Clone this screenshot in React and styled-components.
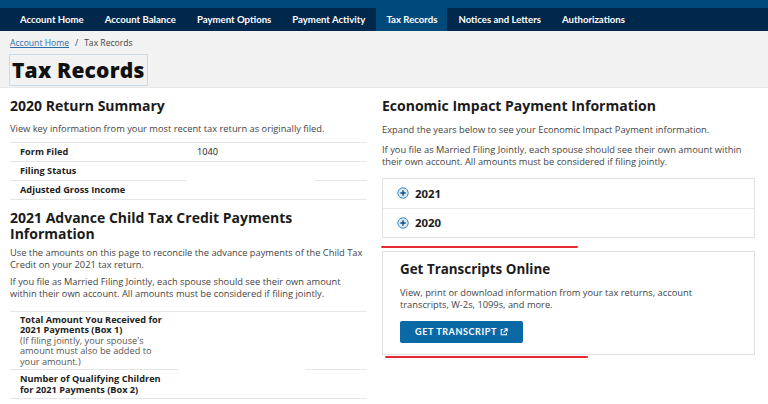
import React from 'react';
import styled, { createGlobalStyle } from 'styled-components';

const GlobalStyle = createGlobalStyle`
  html, body {
    margin: 0;
    padding: 0;
    background: #fff;
  }
  body {
    font-family: "Open Sans", "Liberation Sans", sans-serif;
    color: #333;
  }
  * { box-sizing: border-box; }
`;

const navItems = [
  'Account Home',
  'Account Balance',
  'Payment Options',
  'Payment Activity',
  'Tax Records',
  'Notices and Letters',
  'Authorizations',
];

const TopStrip = styled.div`
  height: 8px;
  background: #004a7b;
`;

const Nav = styled.nav`
  display: flex;
  height: 23px;
  padding-left: 10px;
  background: #00284c;
`;

const NavItem = styled.a`
  display: flex;
  align-items: center;
  padding: 0 10px;
  margin-right: 1px;
  font-family: Lato, "Liberation Sans", sans-serif;
  font-weight: 700;
  font-size: 9.6px;
  color: #fff;
  background: ${(p) => (p.$active ? '#004a7b' : 'transparent')};
  text-decoration: none;
  white-space: nowrap;
`;

const Band = styled.div`
  height: 57px;
  padding: 6px 9px 0;
  background: #f2f2f2;
  border-bottom: 1px solid #e8e8e8;
`;

const Crumbs = styled.div`
  font-size: 8.6px;
  line-height: 12px;
  color: #444;
  margin-left: 1px;

  a {
    color: #2b6ea9;
    text-decoration: underline;
  }

  span {
    margin: 0 6px;
  }
`;

const PageTitle = styled.h1`
  display: inline-block;
  margin: 5px 0 0;
  padding: 0 2px;
  height: 32px;
  line-height: 30px;
  border: 1px solid #c7dbea;
  font-size: 21px;
  font-weight: 800;
  color: #111;
  letter-spacing: 0.2px;
`;

const Content = styled.main`
  display: grid;
  grid-template-columns: 357px 373px;
  column-gap: 15px;
  padding: 10px 13px 0 10px;
`;

const Column = styled.section`
  display: flex;
  flex-direction: column;
`;

const Heading = styled.h2`
  margin: ${(p) => p.$top || 0}px 0 0;
  max-width: ${(p) => p.$max || 'none'};
  font-size: 14px;
  line-height: 16px;
  font-weight: 700;
  color: #1b1b1b;
`;

const Para = styled.p`
  margin: ${(p) => p.$top || 0}px 0 0;
  font-size: 9.3px;
  line-height: 12.5px;
  color: #444;
`;

const Table = styled.div`
  display: grid;
  grid-template-columns: ${(p) => p.$cols};
  margin-top: ${(p) => p.$top}px;
  border-top: 1px solid #e6e6e6;
`;

const Cell = styled.div`
  padding: ${(p) => p.$pad || '4px 10px'};
  min-height: 18px;
  font-size: 9.2px;
  line-height: ${(p) => p.$lh || '10px'};
  font-weight: ${(p) => (p.$bold ? 700 : 400)};
  color: #222;
  border-bottom: 1px solid ${(p) => (p.$bare ? 'transparent' : '#e6e6e6')};
  display: flex;
  flex-direction: column;
  justify-content: center;
`;

const Note = styled.span`
  font-weight: 400;
  color: #555;
`;

const Accordion = styled.div`
  margin-top: 9px;
  border: 1px solid #e2e2e2;
`;

const AccRow = styled.div`
  display: flex;
  align-items: center;
  gap: 6px;
  height: 29px;
  padding-left: 14px;
  font-size: 11.4px;
  font-weight: 700;
  color: #1b1b1b;
  border-top: ${(p) => (p.$first ? 'none' : '1px solid #e8e8e8')};
`;

// red underline marks drawn over the screenshot
const Mark = styled.div`
  height: 2px;
  width: ${(p) => p.$w}px;
  margin: ${(p) => p.$m};
  background: #e62a2f;
  border-radius: 1px;
`;

const Card = styled.div`
  border: 1px solid #e0e0e0;
  padding: 9px 17px 11px;
`;

const CardTitle = styled.h3`
  margin: 0;
  font-size: 13.4px;
  line-height: 16px;
  font-weight: 700;
  color: #1b1b1b;
`;

const Button = styled.a`
  display: inline-flex;
  align-items: center;
  justify-content: center;
  gap: 3px;
  margin-top: 9px;
  width: 123px;
  height: 22px;
  border-radius: 2px;
  background: #0b6aa6;
  color: #fff;
  font-family: Lato, "Liberation Sans", sans-serif;
  font-size: 9px;
  font-weight: 700;
  letter-spacing: 0.6px;
  text-decoration: none;
`;

const PlusIcon = () => (
  <svg width="12" height="12" viewBox="0 0 12 12">
    <circle cx="6" cy="6" r="5.2" fill="#d8ebf7" stroke="#3b8ac4" strokeWidth="1" />
    <path d="M6 3.3v5.4M3.3 6h5.4" stroke="#0e4f83" strokeWidth="1.4" />
  </svg>
);

const ExternalIcon = () => (
  <svg width="8" height="8" viewBox="0 0 10 10" fill="none" stroke="#fff" strokeWidth="1.3">
    <path d="M4 2H1.5v6.5H8V6" />
    <path d="M5.5 1H9v3.5M9 1L4.5 5.5" />
  </svg>
);

export default function App() {
  return (
    <>
      <GlobalStyle />
      <TopStrip />
      <Nav>
        {navItems.map((item) => (
          <NavItem key={item} $active={item === 'Tax Records'}>
            {item}
          </NavItem>
        ))}
      </Nav>
      <Band>
        <Crumbs>
          <a>Account Home</a>
          <span>/</span>Tax Records
        </Crumbs>
        <PageTitle>Tax Records</PageTitle>
      </Band>

      <Content>
        <Column>
          <Heading>2020 Return Summary</Heading>
          <Para $top={9}>View key information from your most recent tax return as originally filed.</Para>
          <Table $cols="177px 128px 1fr" $top={6}>
            <Cell $bold>Form Filed</Cell>
            <Cell>1040</Cell>
            <Cell />
            <Cell $bold>Filing Status</Cell>
            <Cell $bare />
            <Cell />
            <Cell $bold>Adjusted Gross Income</Cell>
            <Cell />
            <Cell />
          </Table>

          <Heading $top={10} $max="300px">2021 Advance Child Tax Credit Payments Information</Heading>
          <Para $top={5}>
            Use the amounts on this page to reconcile the advance payments of the Child Tax Credit on your 2021 tax return.
          </Para>
          <Para $top={4}>
            If you file as Married Filing Jointly, each spouse should see their own amount within their own account. All amounts must be considered if filing jointly.
          </Para>
          <Table $cols="168px 127px 1fr" $top={10}>
            <Cell $bold $pad="3px 10px 2px" $lh="10.5px">
              Total Amount You Received for 2021 Payments (Box 1)
              <Note>(If filing jointly, your spouse's amount must also be added to your amount.)</Note>
            </Cell>
            <Cell $bare />
            <Cell />
            <Cell $bold $pad="4px 10px 3px" $lh="10.5px">
              Number of Qualifying Children for 2021 Payments (Box 2)
            </Cell>
            <Cell />
            <Cell />
          </Table>
        </Column>

        <Column>
          <Heading>Economic Impact Payment Information</Heading>
          <Para $top={10}>Expand the years below to see your Economic Impact Payment information.</Para>
          <Para $top={7}>
            If you file as Married Filing Jointly, each spouse should see their own amount within their own account. All amounts must be considered if filing jointly.
          </Para>
          <Accordion>
            <AccRow $first>
              <PlusIcon />
              2021
            </AccRow>
            <AccRow>
              <PlusIcon />
              2020
            </AccRow>
          </Accordion>
          <Mark $w={197} $m="8px 0 3px -1px" />
          <Card>
            <CardTitle>Get Transcripts Online</CardTitle>
            <Para $top={10}>
              View, print or download information from your tax returns, account transcripts, W-2s, 1099s, and more.
            </Para>
            <Button>
              GET TRANSCRIPT
              <ExternalIcon />
            </Button>
          </Card>
          <Mark $w={203} $m="1px 0 0 3px" />
        </Column>
      </Content>
    </>
  );
}
